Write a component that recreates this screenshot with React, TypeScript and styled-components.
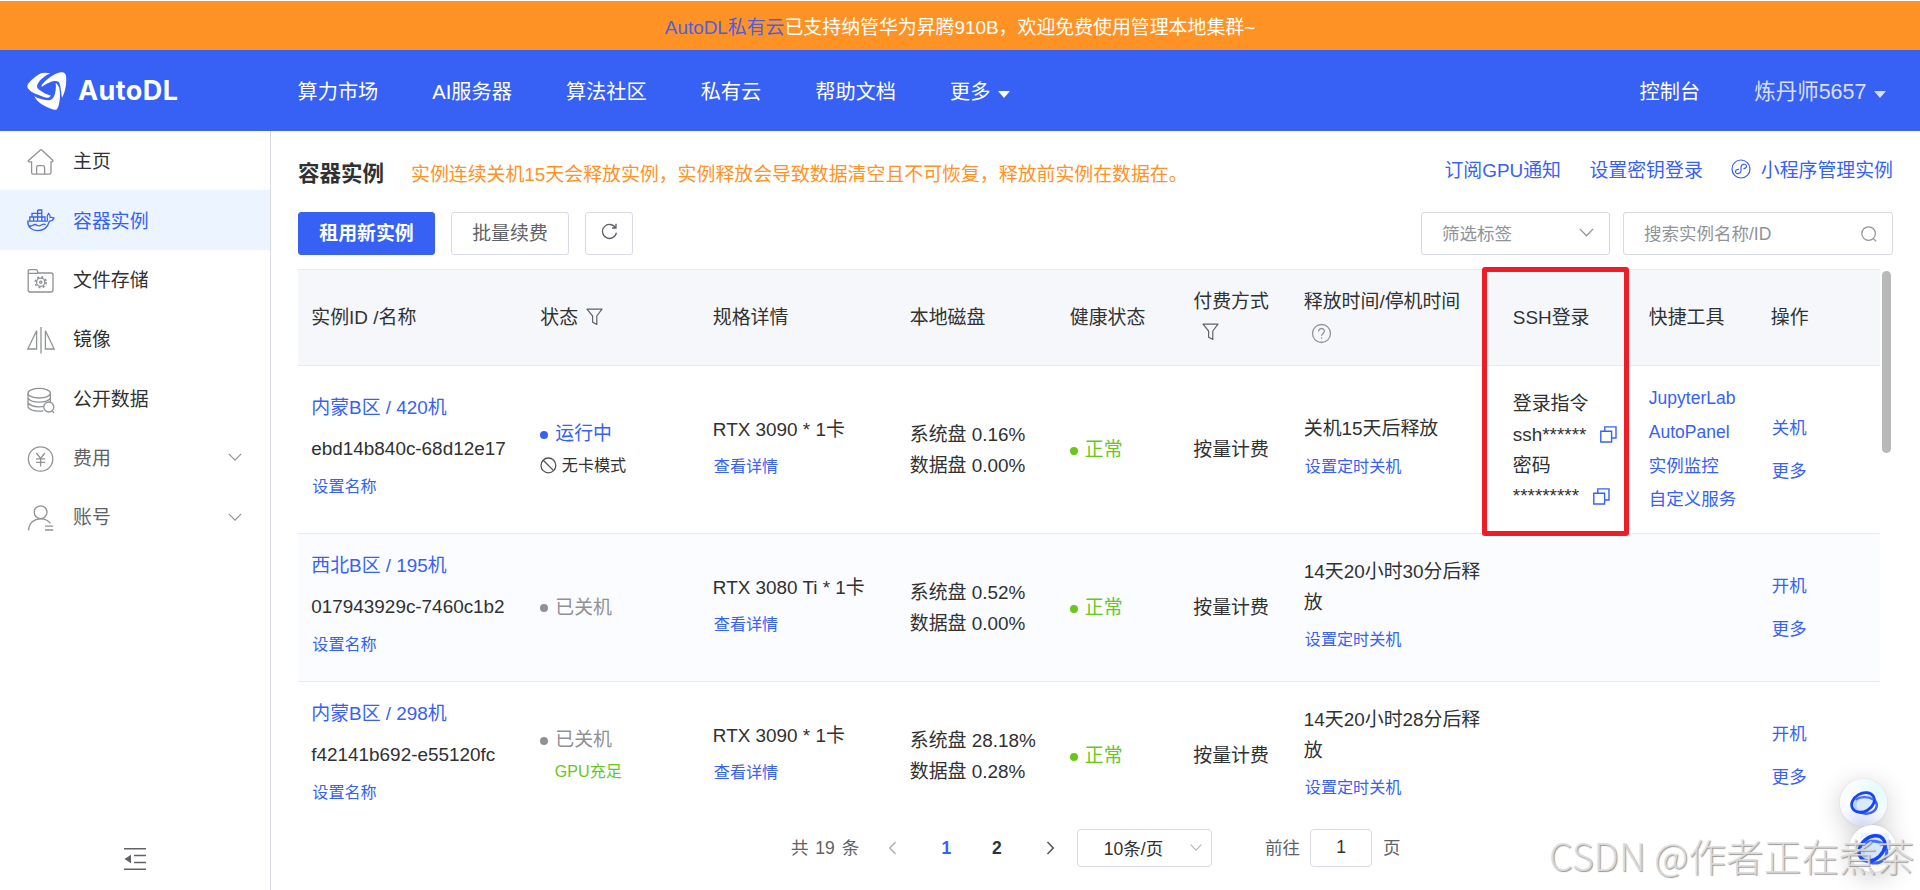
import React from "react";
import styled, { createGlobalStyle } from "styled-components";

const BLUE = "#3761f5";
const GREEN = "#67c81a";
const BORDER = "#e8eaf0";

const GlobalStyle = createGlobalStyle`
  * { box-sizing: border-box; }
  html, body { margin: 0; padding: 0; background: #fff; }
  body {
    font-family: "Liberation Sans", "Noto Sans CJK SC", sans-serif;
    font-size: 18.9px;
    color: #303133;
    overflow: hidden;
  }
  svg { display: block; flex: none; }
`;

const Page = styled.div`
  position: relative;
  display: flex;
  flex-direction: column;
  width: 1920px;
  height: 890px;
  overflow: hidden;
  white-space: nowrap;
`;

const Banner = styled.div`
  height: 50px;
  margin-top: 1px;
  flex: none;
  margin-bottom: -1px;
  background: #ff9224;
  color: #fff;
  text-align: center;
  line-height: 54px;
`;

const BannerLink = styled.a`
  color: #4a5fe6;
`;

const Header = styled.header`
  display: flex;
  align-items: center;
  flex: none;
  height: 81px;
  padding: 0 34px 0 27px;
  background: ${BLUE};
  color: #fff;
  font-size: 20px;
  z-index: 1;
`;

const Logo = styled.div`
  display: flex;
  align-items: center;
  width: 270.5px;
  gap: 11px;
`;

const LogoText = styled.span`
  font-family: Inter, sans-serif;
  font-weight: 700;
  font-size: 27px;
  letter-spacing: 0.4px;
  line-height: 40px;
`;

const Nav = styled.nav`
  display: flex;
  gap: 54px;
  flex: 1;
  padding-top: 2px;
`;

const NavItem = styled.span<{ $large?: boolean }>`
  display: flex;
  align-items: center;
  gap: 7.5px;
  line-height: 30px;
  font-size: ${(p) => (p.$large ? "21.5px" : "20.2px")};
  opacity: ${(p) => (p.$large ? 0.8 : 1)};
`;

const Account = styled.div`
  display: flex;
  align-items: center;
  gap: 54px;
  padding-top: 2px;
`;

const Caret = styled.i`
  border: 6.5px solid transparent;
  border-top: 7px solid #fff;
  border-bottom: 0;
  margin-top: 5px;
`;

const Body = styled.div`
  display: flex;
  flex: 1;
  min-height: 0;
`;

const Sidebar = styled.aside`
  display: flex;
  flex-direction: column;
  width: 271px;
  flex: none;
  border-right: 1px solid #d8dae2;
`;

const MenuItem = styled.div<{ $active?: boolean; $group?: boolean }>`
  display: flex;
  align-items: center;
  height: 59.35px;
  flex: none;
  padding: 0 28px 0 27px;
  gap: 18px;
  line-height: 28px;
  background: ${(p) => (p.$active ? "#ecf5ff" : "transparent")};
  color: ${(p) => (p.$active ? BLUE : p.$group ? "#606266" : "#303133")};
`;

const MenuIcon = styled.svg`
  width: 28px;
  height: 28px;
  fill: none;
  stroke-width: 1.3;
  margin-top: 3px;
`;

const MenuLabel = styled.span`
  flex: 1;
  padding-top: 3px;
`;

const Collapse = styled.div`
  margin: auto 0 20px 124px;
`;

const Main = styled.main`
  display: flex;
  flex-direction: column;
  width: 1649px;
  padding: 0 27px 0 27px;
`;

const TitleRow = styled.div`
  display: flex;
  align-items: center;
  height: 81px;
  flex: none;
`;

const Title = styled.h1`
  margin: 4px 27px 0 0;
  font-size: 21.5px;
  line-height: 32px;
  font-weight: 700;
`;

const Warning = styled.span`
  flex: 1;
  margin-top: 2px;
  color: #ff9224;
`;

const TopLinks = styled.div`
  display: flex;
  gap: 28.5px;
  margin-top: -6px;
  color: ${BLUE};
`;

const IconLink = styled.a`
  display: flex;
  align-items: center;
  gap: 9.5px;
`;

const Toolbar = styled.div`
  display: flex;
  align-items: center;
  height: 43px;
  flex: none;
`;

const Button = styled.button<{ $primary?: boolean; $width: number; $gap: number }>`
  display: flex;
  align-items: center;
  justify-content: center;
  width: ${(p) => p.$width}px;
  height: 43px;
  margin: 0 ${(p) => p.$gap}px 0 0;
  padding: 0 0 4px;
  border: 1px solid ${(p) => (p.$primary ? BLUE : "#d8dbe5")};
  border-radius: 3px;
  background: ${(p) => (p.$primary ? BLUE : "#fff")};
  color: ${(p) => (p.$primary ? "#fff" : "#606266")};
  font: inherit;
  font-weight: ${(p) => (p.$primary ? 700 : 400)};
`;

const Field = styled.div<{ $width: number }>`
  display: flex;
  align-items: center;
  justify-content: space-between;
  width: ${(p) => p.$width}px;
  height: 43px;
  padding: 0 15px 3px 20px;
  margin-left: 13px;
  border: 1px solid #d6d9e2;
  border-radius: 3px;
  color: #909399;
  font-size: 17.5px;
`;

const FieldIcon = styled.svg`
  fill: none;
  stroke: #909399;
  stroke-width: 1.2;
  margin-top: 3px;
`;

const Spacer = styled.div`
  flex: 1;
`;

const TableArea = styled.div`
  display: flex;
  height: 543px;
  margin-top: 14px;
  flex: none;
  overflow: hidden;
`;

const Table = styled.div`
  width: 1582px;
  flex: none;
`;

const Row = styled.div<{ $height: number; $bg?: string }>`
  display: grid;
  grid-template-columns: 229px 172.5px 197px 160px 123.5px 110.5px 209px 136px 122px 122.5px;
  height: ${(p) => p.$height}px;
  background: ${(p) => p.$bg ?? "#fff"};
  border-bottom: 1px solid ${BORDER};
`;

const HeadRow = styled(Row)`
  border-top: 1px solid ${BORDER};
`;

const Cell = styled.div<{ $lift?: number; $drop?: number }>`
  display: flex;
  flex-direction: column;
  justify-content: center;
  align-items: flex-start;
  padding: ${(p) => p.$drop ?? 2}px 0 ${(p) => p.$lift ?? 0}px 13.33px;
  line-height: 30.9px;
`;

const Line = styled.div<{ $gap?: number; $indent?: number }>`
  display: flex;
  align-items: center;
  height: 30.9px;
  gap: ${(p) => p.$gap ?? 0}px;
  padding-left: ${(p) => p.$indent ?? 0}px;
`;

const Link = styled.a<{ $size?: number; $before?: number; $height?: number; $shift?: number }>`
  color: ${BLUE};
  font-size: ${(p) => p.$size ?? 18.9}px;
  margin-top: ${(p) => p.$before ?? 0}px;
  line-height: ${(p) => p.$height ?? 30.9}px;
  padding-left: ${(p) => p.$shift ?? 0}px;
`;

const InstanceId = styled.div`
  margin-top: 10px;
`;

const Wrapped = styled.div`
  width: 182px;
  white-space: normal;
  word-break: break-all;
`;

const Tinted = styled.div<{ $color: string; $small?: boolean }>`
  display: flex;
  align-items: center;
  gap: 7px;
  color: ${(p) => p.$color};
  font-size: ${(p) => (p.$small ? 16.1 : 18.9)}px;
`;

const Dot = styled.i`
  width: 8px;
  height: 8px;
  border-radius: 50%;
  background: currentColor;
`;

const Small = styled.span`
  font-size: 16.1px;
`;

const Scrollbar = styled.div`
  width: 9px;
  height: 182px;
  margin: 2px 0 0 2px;
  border-radius: 5px;
  background: #b9b9b9;
`;

const Pagination = styled.div`
  display: flex;
  align-items: center;
  height: 38px;
  margin-top: 17px;
  padding-left: 493px;
  font-size: 17.5px;
  color: #606266;
`;

const PageTotal = styled.span`
  width: 69px;
  margin-top: -3px;
  word-spacing: 2px;
`;

const PageNumber = styled.span<{ $current?: boolean }>`
  width: 50.5px;
  text-align: center;
  font-weight: 700;
  color: ${(p) => (p.$current ? BLUE : "#303133")};
`;

const PageArrow = styled.span<{ $muted?: boolean; $left: number; $right: number }>`
  color: ${(p) => (p.$muted ? "#b4b9c5" : "#606266")};
  margin: 0 ${(p) => p.$right}px 0 ${(p) => p.$left}px;
`;

const PageBox = styled.div<{ $width: number; $after: number; $inset?: number }>`
  display: flex;
  align-items: center;
  justify-content: center;
  gap: 27px;
  width: ${(p) => p.$width}px;
  height: 38px;
  padding: 0 0 1px ${(p) => p.$inset ?? 0}px;
  margin-right: ${(p) => p.$after}px;
  border: 1px solid #d8dbe5;
  border-radius: 4px;
  color: #303133;
`;

const PageLabel = styled.span<{ $after: number }>`
  width: 35px;
  margin: -3px ${(p) => p.$after}px 0 0;
`;

const Highlight = styled.div`
  position: absolute;
  left: 1482px;
  top: 267px;
  width: 147px;
  height: 269px;
  border: 5px solid #ee1c25;
  border-radius: 3px;
`;

const FloatButton = styled.div<{ $x: number; $y: number; $plain?: boolean }>`
  position: absolute;
  left: ${(p) => p.$x}px;
  top: ${(p) => p.$y}px;
  display: flex;
  align-items: center;
  justify-content: center;
  width: 47px;
  height: 47px;
  border-radius: 50%;
  background: ${(p) =>
    p.$plain
      ? "#fff"
      : "radial-gradient(circle at 45% 95%, #dfe3ff 0%, rgba(223,227,255,0) 45%), radial-gradient(circle at 80% 25%, #e2fbff 0%, #fbfcfd 50%)"};
  box-shadow: 0 5px 26px rgba(0, 0, 0, 0.2), 0 0 2px rgba(0, 0, 0, 0.12);
`;

const Watermark = styled.div`
  position: absolute;
  left: 1549px;
  top: 828px;
  font-family: "Noto Sans CJK SC", sans-serif;
  font-weight: 300;
  font-size: 37.7px;
  line-height: 54px;
  color: rgba(222, 222, 222, 0.9);
  text-shadow: 1px 1px 1px rgba(120, 120, 120, 0.75);
`;

const Chevron = ({ w = 14, color = "#909399" }: { w?: number; color?: string }) => (
  <svg width={w} height={w * 0.6} viewBox="0 0 14 8.4" fill="none" stroke={color} strokeWidth="1.2">
    <path d="M0.8 0.8 7 7.2 13.2 0.8" />
  </svg>
);

const Funnel = () => (
  <svg width="17" height="20" viewBox="0 0 17 20" fill="none" stroke="#606266" strokeWidth="1.2" strokeLinejoin="round">
    <path d="M1 1.2H16L10.8 8V16.4L6.6 14.2V8Z" />
  </svg>
);

const CopyIcon = () => (
  <svg width="17" height="18" viewBox="0 0 17 18" fill="none" stroke={BLUE} strokeWidth="1.4">
    <path d="M.8 5.2H11.6V16H.8ZM4.8 5V.9H16V12H11.8" />
  </svg>
);

const Help = () => (
  <svg width="21" height="21" viewBox="0 0 21 21" fill="none" stroke="#909399" strokeWidth="1.3">
    <circle cx="10.5" cy="10.5" r="9" />
    <path d="M7.6 8.4C7.6 4.6 13.4 4.6 13.4 8.2 13.4 10.4 10.5 10.4 10.5 12.8M10.5 14.2V15.8" />
  </svg>
);

const Rings = () => (
  <svg width="28" height="26" viewBox="0 0 28 26" fill="none">
    <ellipse cx="16" cy="15.2" rx="10.8" ry="8.6" stroke="#3f63f4" strokeWidth="2.4" />
    <ellipse cx="13" cy="12.4" rx="12" ry="9" transform="rotate(-30 13 12.4)" fill="#d6e6ff" fillOpacity="0.8" stroke="#1646f2" strokeWidth="2.8" />
    <path d="M5.5 9.6C10 6.4 18 6 23.4 9.6" stroke="#4a70f6" strokeWidth="2.2" />
  </svg>
);

const TallRings = () => (
  <svg width="32" height="34" viewBox="0 0 32 34" fill="none">
    <rect x="4" y="1" width="28" height="32" fill="#d9f1ff" fillOpacity="0.6" />
    <ellipse cx="18" cy="20" rx="11.8" ry="11" stroke="#3f63f4" strokeWidth="3" />
    <ellipse cx="15" cy="16.4" rx="14.6" ry="10.8" transform="rotate(-42 15 16.4)" fill="#cfe6ff" fillOpacity="0.85" stroke="#1646f2" strokeWidth="3.4" />
    <path d="M6 12.6C11 8.4 20 7.8 26.6 12.6" stroke="#4a70f6" strokeWidth="2.8" />
  </svg>
);

const menu = [
  {
    label: "主页",
    icon: (
      <path d="M13.7 1.8 1.5 12.4Q.8 13.6 2 13.8H4.6V24.6Q4.6 26.2 6.2 26.2H22.4Q24 26.2 24 24.6V13.8H25.2Q26.4 13.4 25.6 12.2L14.8 2Q14.2 1.5 13.7 1.8ZM9.6 26V19.4Q9.6 17.6 11.4 17.6H15.8Q17.6 17.6 17.6 19.4V26" />
    ),
  },
  {
    label: "容器实例",
    active: true,
    icon: (
      <path d="M.8 13.2H20.2C21 12.6 20.4 10.4 20.2 9.4 20 7.6 20.8 6.4 21.6 5.4 22.8 6.8 23.4 8 23.2 9.4 24.6 9.2 26 9.4 27 10 26 12.4 24.4 13.2 22.4 13.2 20.6 19.6 16.4 22.6 10.6 22.6 4.4 22.6.8 19.2.8 13.2ZM2.8 13V9H18V13M5 9V5.4H14.8V13M6.6 9V13M10.6 2V13M10.6 2H14.8V5.4M1.6 17.6Q4 18.6 6 17.2T10 17.2 14.4 17 18.6 16.8" />
    ),
  },
  {
    label: "文件存储",
    icon: (
      <>
        <path d="M1.2 24V4.2Q1.2 2.6 2.8 2.6H9Q10.2 2.6 10.4 4L10.8 6H24Q26 6 26 8V23Q26 25 24 25H3Q1.2 25 1.2 23ZM1.2 6.4H11" />
        <circle cx="13.7" cy="15.2" r="4.1" />
        <circle cx="13.7" cy="15.2" r="1.1" />
        <circle cx="13.7" cy="15.2" r="5.4" strokeDasharray="2 2.24" strokeWidth="1.8" />
      </>
    ),
  },
  {
    label: "镜像",
    icon: <path d="M14 1V27.6M9.6 4.8V23H.8ZM18.4 4.8V23H27.2Z" />,
  },
  {
    label: "公开数据",
    icon: (
      <>
        <ellipse cx="12.2" cy="7.2" rx="11.2" ry="4.8" />
        <path d="M1 7.2V21Q3 25 12.2 25.2 14.6 25.2 16.4 24.8M23.4 7.2V17M1 12Q3 16 12.2 16.2 21.4 16 23.4 12M1 16.6Q3 20.6 12.2 20.8 15 20.8 16.6 20.4" />
        <circle cx="21.8" cy="21" r="5" />
        <path d="M25 24.6 27 27" />
      </>
    ),
  },
  {
    label: "费用",
    group: true,
    icon: (
      <>
        <circle cx="13.6" cy="14" r="12.2" />
        <path d="M9.4 8 13.6 13.4 17.8 8M13.6 13.4V21.6M9 13.8H18.2M9 17.4H18.2" />
      </>
    ),
  },
  {
    label: "账号",
    group: true,
    icon: (
      <>
        <circle cx="13.6" cy="8.2" r="6.4" />
        <path d="M1.6 26.4C2 19 7 14.8 13.6 14.8 18 14.8 21.4 16.6 23.4 19.4M18 22.2H26.2M18 26H26.2" />
      </>
    ),
  },
];

type Instance = {
  machine: string;
  id: string;
  gpu: string;
  disk: [string, string];
  release: string;
  height: number;
  running?: boolean;
  gpuFree?: boolean;
};

const instances: Instance[] = [
  { machine: "内蒙B区 / 420机", id: "ebd14b840c-68d12e17", gpu: "RTX 3090 * 1卡", disk: ["0.16%", "0.00%"], release: "关机15天后释放", height: 168, running: true },
  { machine: "西北B区 / 195机", id: "017943929c-7460c1b2", gpu: "RTX 3080 Ti * 1卡", disk: ["0.52%", "0.00%"], release: "14天20小时30分后释放", height: 148 },
  { machine: "内蒙B区 / 298机", id: "f42141b692-e55120fc", gpu: "RTX 3090 * 1卡", disk: ["28.18%", "0.28%"], release: "14天20小时28分后释放", height: 148, gpuFree: true },
];

const Status = ({ item }: { item: Instance }) => (
  <Cell $drop={1}>
    <Tinted $color={item.running ? BLUE : "#8f9194"}>
      <Dot />
      {item.running ? "运行中" : "已关机"}
    </Tinted>
    {item.running && (
      <Line $gap={4.5}>
        <svg width="17" height="17" viewBox="0 0 17 17" fill="none" stroke="#505256" strokeWidth="1.3">
          <circle cx="8.4" cy="8.4" r="7.4" />
          <path d="M3.2 3.2 13.6 13.6" />
        </svg>
        <Small>无卡模式</Small>
      </Line>
    )}
    {item.gpuFree && (
      <Line $indent={14.5}>
        <Tinted $color={GREEN} $small>GPU充足</Tinted>
      </Line>
    )}
  </Cell>
);

const InstanceRow = ({ item, striped }: { item: Instance; striped: boolean }) => (
  <Row $height={item.height} $bg={striped ? "#fafcff" : "#fff"}>
    <Cell $lift={6}>
      <Link>{item.machine}</Link>
      <InstanceId>{item.id}</InstanceId>
      <Link $size={16.1} $before={5.5} $shift={1}>设置名称</Link>
    </Cell>
    <Status item={item} />
    <Cell $lift={5}>
      <div>{item.gpu}</div>
      <Link $size={16.1} $before={5} $shift={1}>查看详情</Link>
    </Cell>
    <Cell>
      <div>系统盘 {item.disk[0]}</div>
      <div>数据盘 {item.disk[1]}</div>
    </Cell>
    <Cell>
      <Tinted $color={GREEN}>
        <Dot />
        正常
      </Tinted>
    </Cell>
    <Cell>按量计费</Cell>
    <Cell $lift={5}>
      <Wrapped>{item.release}</Wrapped>
      <Link $size={16.1} $before={5.3} $shift={1}>设置定时关机</Link>
    </Cell>
    <Cell>
      {item.running && (
        <>
          <div>登录指令</div>
          <Line $gap={13.5}>ssh******<CopyIcon /></Line>
          <div>密码</div>
          <Line $gap={13.5}>*********<CopyIcon /></Line>
        </>
      )}
    </Cell>
    <Cell $drop={0}>
      {item.running &&
        ["JupyterLab", "AutoPanel", "实例监控", "自定义服务"].map((tool) => (
          <Link key={tool} $size={17.5} $height={33.6}>{tool}</Link>
        ))}
    </Cell>
    <Cell $lift={2} $drop={2}>
      <Link $size={17.4} $height={43} $shift={1}>{item.running ? "关机" : "开机"}</Link>
      <Link $size={17.4} $height={43} $shift={1}>更多</Link>
    </Cell>
  </Row>
);

export default function App() {
  return (
    <Page>
      <GlobalStyle />
      <Banner>
        <BannerLink>AutoDL私有云</BannerLink>已支持纳管华为昇腾910B，欢迎免费使用管理本地集群~
      </Banner>
      <Header>
        <Logo>
          <svg width="40" height="40" viewBox="0 0 120 120" fill="#fff">
            <path d="M70 7C50 2 38 6 24 18 10 30 1 38 1 46 1 54 10 60 20 66L50 78C60 82 68 80 72 74 56 70 34 56 31 50 28 44 34 32 46 22 54 15 62 10 70 7Z" />
            <path d="M44 42C58 26 80 8 100 4 110 2 115 6 117 14 119 34 117 58 105 80 102 66 102 48 97 36 92 26 72 28 44 48Z" />
            <path d="M22 76C40 86 60 90 72 86 86 78 88 52 86 36 96 42 99 54 99 74 98 96 94 112 88 116 82 119 60 110 44 100 32 92 26 84 22 76Z" />
          </svg>
          <LogoText>AutoDL</LogoText>
        </Logo>
        <Nav>
          {["算力市场", "AI服务器", "算法社区", "私有云", "帮助文档"].map((t) => (
            <NavItem key={t}>{t}</NavItem>
          ))}
          <NavItem>更多<Caret /></NavItem>
        </Nav>
        <Account>
          <NavItem>控制台</NavItem>
          <NavItem $large>炼丹师5657<Caret /></NavItem>
        </Account>
      </Header>
      <Body>
        <Sidebar>
          {menu.map((m) => (
            <MenuItem key={m.label} $active={m.active} $group={m.group}>
              <MenuIcon viewBox="0 0 28 28" stroke={m.active ? BLUE : "#909294"}>{m.icon}</MenuIcon>
              <MenuLabel>{m.label}</MenuLabel>
              {m.group && <Chevron w={14} />}
            </MenuItem>
          ))}
          <Collapse>
            <svg width="24" height="22" viewBox="0 0 24 22" stroke="#606266" strokeWidth="1.4">
              <path d="M0 .8H22M10 7.5H22M10 14.5H22M0 21.2H22" />
              <path d="M.5 11 7 6.8V15.2Z" fill="#606266" stroke="none" />
            </svg>
          </Collapse>
        </Sidebar>
        <Main>
          <TitleRow>
            <Title>容器实例</Title>
            <Warning>实例连续关机15天会释放实例，实例释放会导致数据清空且不可恢复，释放前实例在数据在。</Warning>
            <TopLinks>
              <a>订阅GPU通知</a>
              <a>设置密钥登录</a>
              <IconLink>
                <svg width="20" height="20" viewBox="0 0 20 20" fill="none" stroke={BLUE} strokeWidth="1.2">
                  <circle cx="10" cy="10" r="9" />
                  <path d="M8 10.2C5.4 10.4 4 11.8 4.6 13.4 5.4 15.4 9.8 15 10 12V8C10.2 5 14.4 4.4 15.4 6.6 16 8.4 14.4 9.6 12.4 9.8" />
                </svg>
                小程序管理实例
              </IconLink>
            </TopLinks>
          </TitleRow>
          <Toolbar>
            <Button $primary $width={137} $gap={16}>租用新实例</Button>
            <Button $width={118} $gap={16}>批量续费</Button>
            <Button $width={48} $gap={0}>
              <svg width="17" height="17" viewBox="0 0 17 17" fill="none" stroke="#606266" strokeWidth="1.3">
                <path d="M14.6 5A7 7 0 1 0 15.4 9.6M11 5H15V.8" />
              </svg>
            </Button>
            <Spacer />
            <Field $width={189}>筛选标签<Chevron w={15} /></Field>
            <Field $width={270}>
              搜索实例名称/ID
              <FieldIcon width="16" height="16" viewBox="0 0 16 16">
                <circle cx="7.6" cy="7.6" r="6.8" />
                <path d="M12 12.4 15.2 15.2" />
              </FieldIcon>
            </Field>
          </Toolbar>
          <TableArea>
            <Table>
              <HeadRow $height={97} $bg="#f5f7fb">
                <Cell $drop={1}>实例ID /名称</Cell>
                <Cell $drop={1}><Line $gap={8}>状态<Funnel /></Line></Cell>
                <Cell $drop={1}>规格详情</Cell>
                <Cell $drop={1}>本地磁盘</Cell>
                <Cell $drop={1}>健康状态</Cell>
                <Cell $drop={1}>
                  <div>付费方式</div>
                  <Line $indent={9}><Funnel /></Line>
                </Cell>
                <Cell $drop={1}>
                  <div>释放时间/停机时间</div>
                  <Line $indent={7}><Help /></Line>
                </Cell>
                <Cell $drop={1}>SSH登录</Cell>
                <Cell $drop={1}>快捷工具</Cell>
                <Cell $drop={1}>操作</Cell>
              </HeadRow>
              {instances.map((item, i) => (
                <InstanceRow key={item.id} item={item} striped={i % 2 === 1} />
              ))}
            </Table>
            <Scrollbar />
          </TableArea>
          <Pagination>
            <PageTotal>共 19 条</PageTotal>
            <PageArrow $muted $left={28} $right={24}>
              <svg width="9" height="14" viewBox="0 0 9 14" fill="none" stroke="currentColor" strokeWidth="1.8"><path d="M7.5 1 1.8 7 7.5 13" /></svg>
            </PageArrow>
            <PageNumber $current>1</PageNumber>
            <PageNumber>2</PageNumber>
            <PageArrow $left={24} $right={22}>
              <svg width="9" height="14" viewBox="0 0 9 14" fill="none" stroke="currentColor" strokeWidth="1.8"><path d="M1.5 1 7.2 7 1.5 13" /></svg>
            </PageArrow>
            <PageBox $width={135} $after={53} $inset={17}>10条/页<Chevron w={12} color="#b0b4bf" /></PageBox>
            <PageLabel $after={10}>前往</PageLabel>
            <PageBox $width={62} $after={11}>1</PageBox>
            <PageLabel $after={0}>页</PageLabel>
          </Pagination>
        </Main>
      </Body>
      <Highlight />
      <FloatButton $x={1840} $y={779}><Rings /></FloatButton>
      <FloatButton $x={1849} $y={825} $plain><TallRings /></FloatButton>
      <Watermark>CSDN @作者正在煮茶</Watermark>
    </Page>
  );
}
